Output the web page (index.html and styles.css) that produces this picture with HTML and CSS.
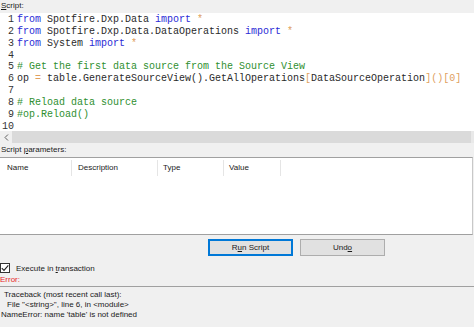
FILE: index.html
```html
<!DOCTYPE html>
<html>
<head>
<meta charset="utf-8">
<link rel="stylesheet" href="styles.css">
</head>
<body>
<div class="dialog">
  <div class="label top-label"><u>S</u>cript:</div>
  <div class="editor">
    <div class="line"><span class="num">1</span><span class="code"><span class="kw">from</span> Spotfire.Dxp.Data <span class="kw">import</span> <span class="op">*</span></span></div>
    <div class="line"><span class="num">2</span><span class="code"><span class="kw">from</span> Spotfire.Dxp.Data.DataOperations <span class="kw">import</span> <span class="op">*</span></span></div>
    <div class="line"><span class="num">3</span><span class="code"><span class="kw">from</span> System <span class="kw">import</span> <span class="op">*</span></span></div>
    <div class="line"><span class="num">4</span><span class="code"></span></div>
    <div class="line"><span class="num">5</span><span class="code"><span class="cm"># Get the first data source from the Source View</span></span></div>
    <div class="line"><span class="num">6</span><span class="code">op <span class="op">=</span> table.GenerateSourceView().GetAllOperations<span class="op">[</span>DataSourceOperation<span class="op">]()[0]</span></span></div>
    <div class="line"><span class="num">7</span><span class="code"></span></div>
    <div class="line"><span class="num">8</span><span class="code"><span class="cm"># Reload data source</span></span></div>
    <div class="line"><span class="num">9</span><span class="code"><span class="cm">#op.Reload()</span></span></div>
    <div class="line"><span class="num">10</span><span class="code"></span></div>
  </div>
  <div class="hscroll">
    <div class="arrow"><svg width="5" height="7" viewBox="0 0 5 7"><path d="M4 0.5 L1 3.5 L4 6.5" fill="none" stroke="#606060" stroke-width="1"/></svg></div>
    <div class="thumb"></div>
  </div>
  <div class="label params-label">Script <u>p</u>arameters:</div>
  <div class="table">
    <div class="thead">
      <div class="th c-name">Name</div>
      <div class="th c-desc">Description</div>
      <div class="th c-type">Type</div>
      <div class="th c-value">Value</div>
    </div>
  </div>
  <div class="buttons">
    <button class="btn primary">R<u>u</u>n Script</button>
    <button class="btn">Und<u>o</u></button>
  </div>
  <div class="check-row">
    <span class="checkbox"><svg width="8" height="8" viewBox="0 0 8 8"><path d="M0.8 4.2 L3 6.4 L7.3 1.4" fill="none" stroke="#222" stroke-width="1.1"/></svg></span>
    <span class="check-text">Execute in <u>t</u>ransaction</span>
  </div>
  <div class="label error-label">Error:</div>
  <div class="errorbox">
    <div class="err-line l1">Traceback (most recent call last):</div>
    <div class="err-line l2">File "&lt;string&gt;", line 6, in &lt;module&gt;</div>
    <div class="err-line l3">NameError: name 'table' is not defined</div>
  </div>
</div>
</body>
</html>
```
FILE: styles.css
```css
html, body {
  margin: 0;
  padding: 0;
  background: #f0f0f0;
}
body {
  width: 474px;
  height: 327px;
  overflow: hidden;
  font-family: "Liberation Sans", Arial, sans-serif;
  font-size: 8px;
  color: #1a1a1a;
}
.dialog {
  display: flex;
  flex-direction: column;
  width: 474px;
}
u { text-decoration: underline; text-underline-offset: 1px; }
.label {
  padding-left: 1px;
  line-height: 12px;
  height: 13px;
}
.top-label { height: 13px; }
.editor {
  background: #ffffff;
  height: 118px;
  padding-top: 1px;
  box-sizing: border-box;
  font-family: "Liberation Mono", "Courier New", monospace;
  font-size: 10px;
  color: #2a2a2a;
  overflow: hidden;
}
.line {
  display: flex;
  height: 11.85px;
  line-height: 11.85px;
  white-space: pre;
}
.num {
  width: 14px;
  text-align: right;
  color: #333;
  flex: none;
}
.code { padding-left: 3px; }
.kw { color: #2b2bd6; }
.cm { color: #2f8f2f; }
.op { color: #e0a060; }
.hscroll {
  display: flex;
  height: 12px;
  background: #e9e9e9;
}
.arrow {
  width: 12px;
  display: flex;
  align-items: center;
  justify-content: center;
  background: #f0f0f0;
}
.thumb {
  width: 459px;
  background: #dadada;
}
.params-label {
  height: 14px;
  line-height: 14px;
}
.table {
  height: 78px;
  box-sizing: border-box;
  background: #ffffff;
  border-top: 1px solid #a0a0a0;
  border-bottom: 1px solid #a0a0a0;
  border-right: 1px solid #c8c8c8;
  margin-right: 1px;
}
.thead {
  display: flex;
  padding-top: 2px;
}
.th {
  height: 16px;
  line-height: 16px;
  padding-left: 7px;
  box-sizing: border-box;
  border-right: 1px solid #e5e5e5;
  color: #222;
}
.c-name { width: 72px; }
.c-desc { width: 86px; padding-left: 6px; }
.c-type { width: 66px; padding-left: 5px; }
.c-value { width: 57px; padding-left: 5px; }
.buttons {
  display: flex;
  gap: 7px;
  padding-left: 208px;
  padding-top: 4px;
  height: 27px;
  box-sizing: border-box;
}
.btn {
  width: 85px;
  height: 17px;
  margin: 0;
  padding: 0;
  font-family: "Liberation Sans", Arial, sans-serif;
  font-size: 8px;
  color: #1a1a1a;
  background: #e1e1e1;
  border: 1px solid #adadad;
  box-sizing: border-box;
}
.btn.primary {
  border: 2px solid #0078d7;
}
.check-row {
  display: flex;
  align-items: center;
  height: 12px;
  gap: 6px;
}
.checkbox {
  width: 10px;
  height: 10px;
  box-sizing: border-box;
  border: 1px solid #333;
  background: #fff;
  display: flex;
  align-items: center;
  justify-content: center;
}
.error-label {
  color: #e8262a;
  height: 12px;
  line-height: 11px;
  padding-left: 0;
}
.errorbox {
  border-top: 1px solid #a0a0a0;
  height: 40px;
  padding-top: 3px;
  box-sizing: border-box;
}
.err-line {
  height: 10px;
  line-height: 10px;
  white-space: pre;
}
.l1 { padding-left: 4px; }
.l2 { padding-left: 7px; }
.l3 { padding-left: 1px; }
```
